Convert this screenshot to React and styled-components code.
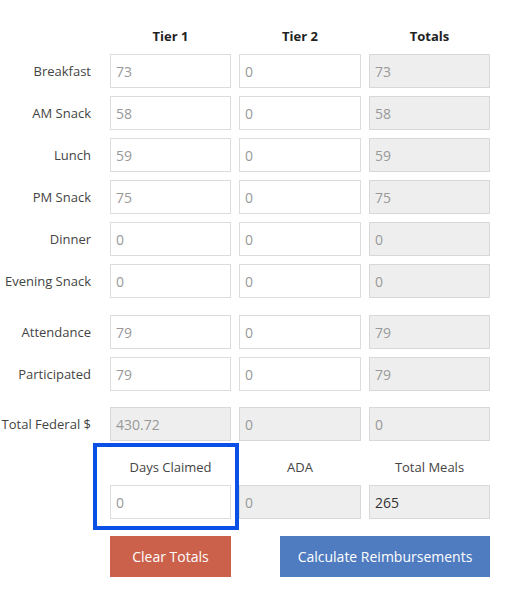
import React from 'react';
import styled, { createGlobalStyle } from 'styled-components';

const GlobalStyle = createGlobalStyle`
  body {
    margin: 0;
    background: #fff;
    font-family: "Open Sans", "Liberation Sans", sans-serif;
    color: #333;
  }
`;

const Form = styled.div`
  width: 530px;
  padding-top: 26px;
  display: flex;
  flex-direction: column;
`;

const Grid = styled.div`
  display: grid;
  grid-template-columns: 102px 121px 122px 121px;
  column-gap: 8px;
  align-items: center;
`;

const Row = styled(Grid)`
  height: 34px;
  margin-top: ${p => p.$top || 8}px;
`;

const HeadCell = styled.div`
  font-size: 13px;
  font-weight: 700;
  text-align: center;
  line-height: 20px;
  color: #222;
`;

const Label = styled.div`
  font-size: 13px;
  text-align: right;
  padding-right: 11px;
  color: #444;
  white-space: nowrap;
`;

const Field = styled.input`
  box-sizing: border-box;
  width: 100%;
  height: 34px;
  padding: 0 5px;
  border: 1px solid ${p => (p.disabled ? '#d8d8d8' : '#dcdcdc')};
  background: ${p => (p.disabled ? '#eeeeee' : '#fff')};
  font-family: inherit;
  font-size: 14px;
  color: ${p => (p.$dark ? '#333' : '#999')};
  -webkit-text-fill-color: ${p => (p.$dark ? '#333' : '#999')};
  opacity: 1;
  outline: none;
  border-radius: 0;
`;

const Summary = styled(Grid)`
  align-items: start;
`;

const SummaryCell = styled.div`
  position: relative;
  grid-column: ${p => p.$col};
  display: flex;
  flex-direction: column;
  gap: 8px;
  padding-top: 16px;

  ${p =>
    p.$highlight &&
    `
    &::before {
      content: "";
      position: absolute;
      top: 2px;
      left: -17px;
      right: -8px;
      bottom: -11px;
      border: 4px solid #0a4fe6;
    }
  `}
`;

const SummaryLabel = styled.div`
  font-size: 13px;
  text-align: center;
  line-height: 20px;
  color: #444;
`;

const Actions = styled(Grid)`
  margin-top: 17px;
`;

const Button = styled.button`
  grid-column: ${p => p.$col};
  justify-self: ${p => p.$align || 'stretch'};
  width: ${p => p.$width || 'auto'};
  height: 41px;
  border: none;
  border-radius: 0;
  background: ${p => p.$bg};
  color: #fff;
  font-family: inherit;
  font-size: 14px;
  cursor: pointer;
`;

const meals = [
  ['Breakfast', '73', '0', '73'],
  ['AM Snack', '58', '0', '58'],
  ['Lunch', '59', '0', '59'],
  ['PM Snack', '75', '0', '75'],
  ['Dinner', '0', '0', '0'],
  ['Evening Snack', '0', '0', '0'],
];

const counts = [
  ['Attendance', '79', '0', '79'],
  ['Participated', '79', '0', '79'],
];

const EntryRow = ({ label, t1, t2, total, top, lockTier1 }) => (
  <Row $top={top}>
    <Label>{label}</Label>
    <Field defaultValue={t1} disabled={lockTier1} />
    <Field defaultValue={t2} disabled={lockTier1} />
    <Field defaultValue={total} disabled />
  </Row>
);

export default function App() {
  return (
    <>
      <GlobalStyle />
      <Form>
        <Grid>
          <span />
          <HeadCell>Tier 1</HeadCell>
          <HeadCell>Tier 2</HeadCell>
          <HeadCell>Totals</HeadCell>
        </Grid>

        {meals.map(([label, a, b, c]) => (
          <EntryRow key={label} label={label} t1={a} t2={b} total={c} top={8} />
        ))}

        {counts.map(([label, a, b, c], i) => (
          <EntryRow key={label} label={label} t1={a} t2={b} total={c} top={i === 0 ? 17 : 8} />
        ))}

        <EntryRow label="Total Federal $" t1="430.72" t2="0" total="0" top={16} lockTier1 />

        <Summary>
          <SummaryCell $col={2} $highlight>
            <SummaryLabel>Days Claimed</SummaryLabel>
            <Field defaultValue="0" />
          </SummaryCell>
          <SummaryCell $col={3}>
            <SummaryLabel>ADA</SummaryLabel>
            <Field defaultValue="0" disabled />
          </SummaryCell>
          <SummaryCell $col={4}>
            <SummaryLabel>Total Meals</SummaryLabel>
            <Field defaultValue="265" disabled $dark />
          </SummaryCell>
        </Summary>

        <Actions>
          <Button $col={2} $bg="#cc614b">Clear Totals</Button>
          <Button $col="3 / 5" $align="end" $width="210px" $bg="#4f7bc0">
            Calculate Reimbursements
          </Button>
        </Actions>
      </Form>
    </>
  );
}
